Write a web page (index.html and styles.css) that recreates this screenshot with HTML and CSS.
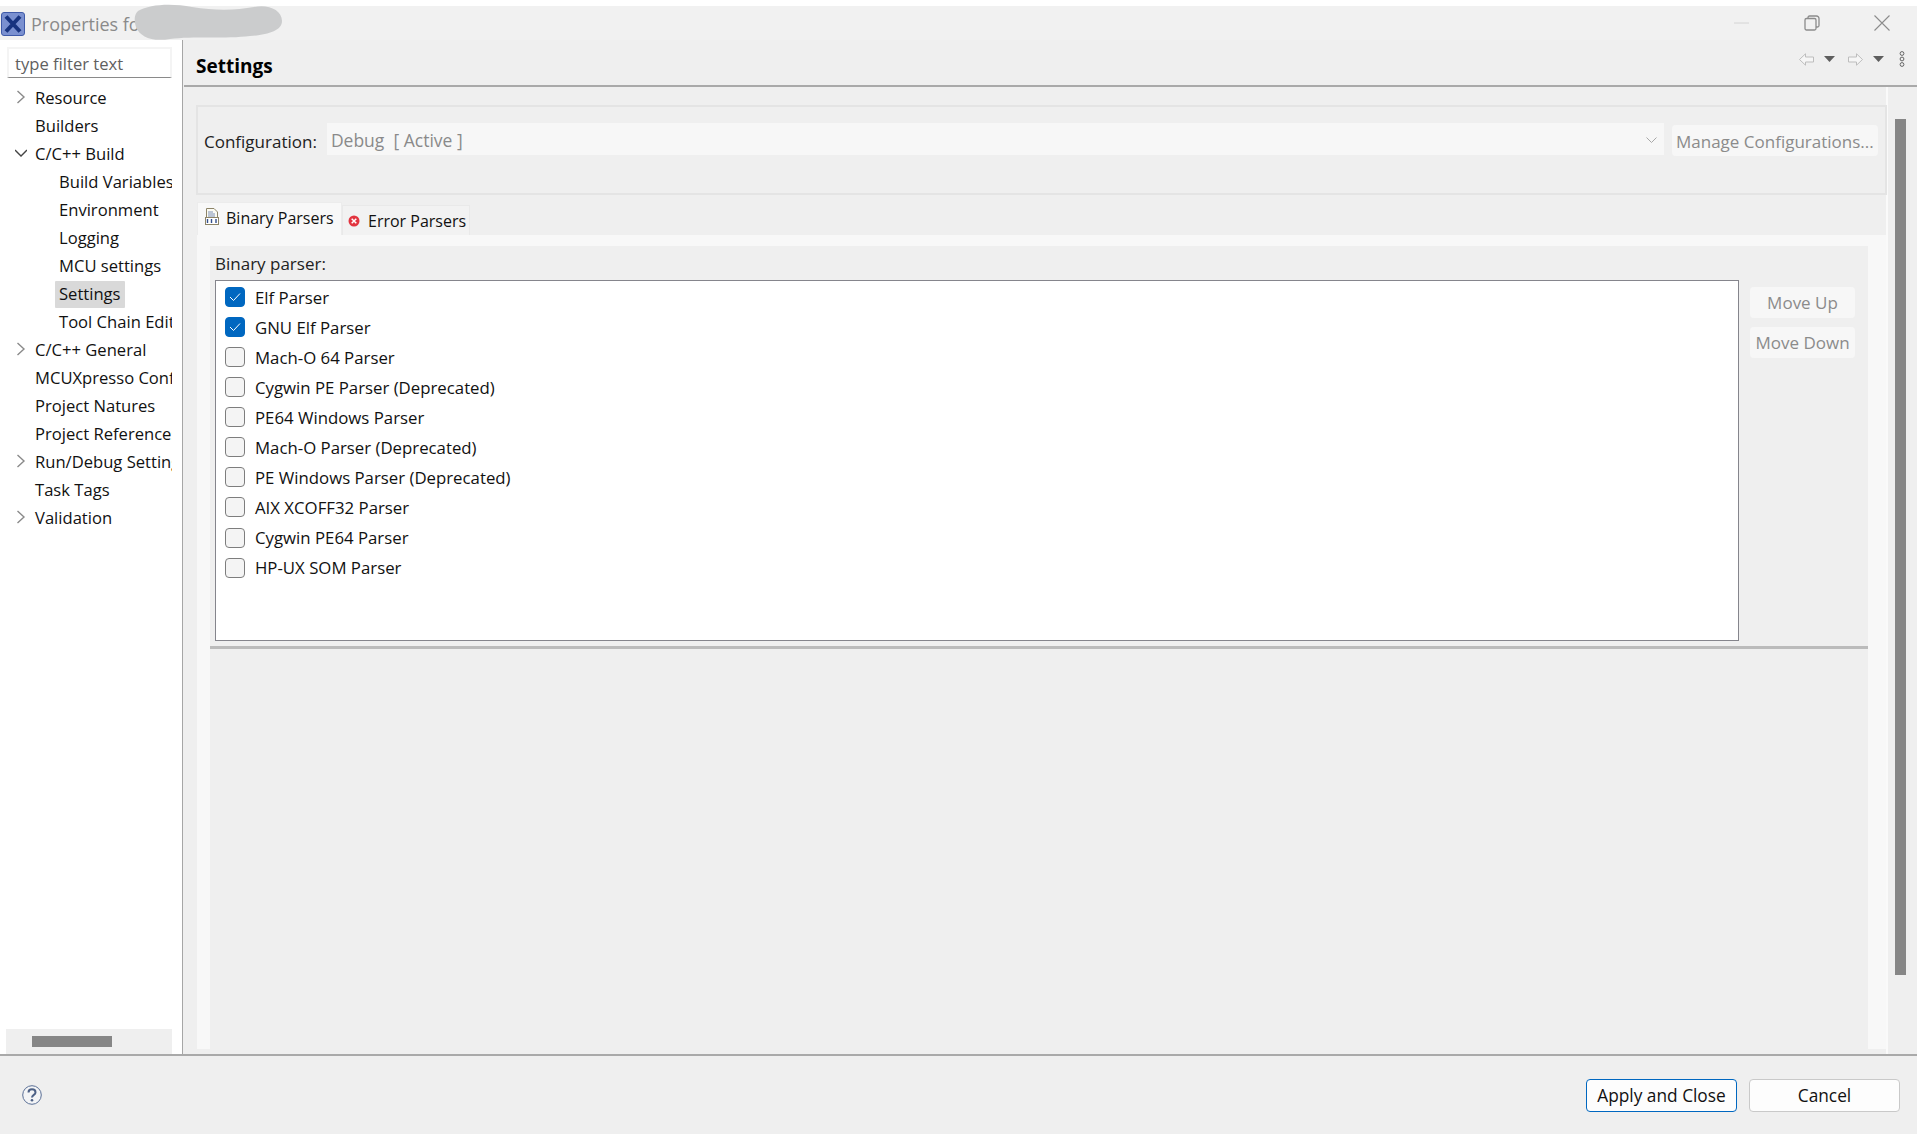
FILE: index.html
```html
<!DOCTYPE html>
<html lang="en">
<head>
<meta charset="utf-8">
<title>Properties</title>
<link rel="stylesheet" href="styles.css">
</head>
<body>
<div class="window">
  <div class="topstrip"></div>
  <header class="titlebar">
    <svg class="app-icon" width="24" height="24" viewBox="0 0 24 24"><rect x="0.5" y="0.5" width="23" height="23" rx="2.5" fill="#7a90d0" stroke="#3f5aa8"/><path d="M5 4.5 L19 19.5 M19 4.5 L5 19.5" stroke="#17337f" stroke-width="4" fill="none"/></svg>
    <span class="title-text">Properties for</span>
    <svg class="smudge" width="152" height="38" viewBox="0 0 152 38"><path d="M6 8 C18 1 40 0 60 4 C85 8 105 7 122 4 C135 1 150 6 150 18 C150 28 135 32 118 33 C95 36 60 33 38 36 C20 39 8 34 4 24 C2 17 2 12 6 8 Z" fill="#cbcccd"/></svg>
    <div class="winctl">
      <svg width="16" height="16" viewBox="0 0 16 16"><path d="M0 8 H15" stroke="#d4d4d4" fill="none"/></svg>
      <svg width="16" height="16" viewBox="0 0 16 16"><path d="M1 5 a1.5 1.5 0 0 1 1.5-1.5 h8 a1.5 1.5 0 0 1 1.5 1.5 v8.500 a1.500 1.500 0 0 1-1.500 1.500 h-8 a1.500 1.500 0 0 1-1.500-1.500z M4 3.500 v-1 a1.500 1.500 0 0 1 1.500-1.500 h7 a2.500 2.500 0 0 1 2.500 2.500 v7 a1.500 1.500 0 0 1-1.500 1.500 h-1" fill="none" stroke="#8c8c8c" stroke-width="1.300"/></svg>
      <svg width="16" height="16" viewBox="0 0 16 16"><path d="M0.500 0.500 L15.500 15.500 M15.500 0.500 L0.500 15.500" fill="none" stroke="#8c8c8c" stroke-width="1.100"/></svg>
    </div>
  </header>

  <div class="middle">
    <aside class="sidebar">
      <div class="filter">type filter text</div>
      <ul class="tree">
        <li class="row"><svg class="tw" width="12" height="14" viewBox="0 0 12 14"><path d="M2.500 1 L9 7 L2.500 13" fill="none" stroke="#8a8a8a" stroke-width="1.400"/></svg><span>Resource</span></li>
        <li class="row"><span class="tw"></span><span>Builders</span></li>
        <li class="row"><svg class="tw" width="12" height="14" viewBox="0 0 12 14"><path d="M0 4 L6 10 L12 4" fill="none" stroke="#444" stroke-width="1.400"/></svg><span>C/C++ Build</span></li>
        <li class="row sub"><span>Build Variables</span></li>
        <li class="row sub"><span>Environment</span></li>
        <li class="row sub"><span>Logging</span></li>
        <li class="row sub"><span>MCU settings</span></li>
        <li class="row sub"><span class="selected">Settings</span></li>
        <li class="row sub"><span>Tool Chain Editor</span></li>
        <li class="row"><svg class="tw" width="12" height="14" viewBox="0 0 12 14"><path d="M2.500 1 L9 7 L2.500 13" fill="none" stroke="#8a8a8a" stroke-width="1.400"/></svg><span>C/C++ General</span></li>
        <li class="row"><span class="tw"></span><span>MCUXpresso Config</span></li>
        <li class="row"><span class="tw"></span><span>Project Natures</span></li>
        <li class="row"><span class="tw"></span><span>Project References</span></li>
        <li class="row"><svg class="tw" width="12" height="14" viewBox="0 0 12 14"><path d="M2.500 1 L9 7 L2.500 13" fill="none" stroke="#8a8a8a" stroke-width="1.400"/></svg><span>Run/Debug Settings</span></li>
        <li class="row"><span class="tw"></span><span>Task Tags</span></li>
        <li class="row"><svg class="tw" width="12" height="14" viewBox="0 0 12 14"><path d="M2.500 1 L9 7 L2.500 13" fill="none" stroke="#8a8a8a" stroke-width="1.400"/></svg><span>Validation</span></li>
      </ul>
      <div class="hscroll"><div class="hthumb"></div></div>
    </aside>

    <main class="main">
      <div class="page-head">
        <h1 class="page-title">Settings</h1>
        <div class="nav">
          <svg width="15" height="13" viewBox="0 0 15 13"><path d="M0.500 6.500 L6.500 0.800 V4 H14.500 V9 H6.500 V12.200 Z" fill="#f6f6f6" stroke="#bdbdbd"/></svg>
          <svg class="drop" width="11" height="6" viewBox="0 0 11 6"><path d="M0 0 H11 L5.500 6 Z" fill="#5e5e5e"/></svg>
          <svg class="fwd" width="15" height="13" viewBox="0 0 15 13"><path d="M14.500 6.500 L8.500 0.800 V4 H0.500 V9 H8.500 V12.200 Z" fill="#f6f6f6" stroke="#bdbdbd"/></svg>
          <svg class="drop" width="11" height="6" viewBox="0 0 11 6"><path d="M0 0 H11 L5.500 6 Z" fill="#5e5e5e"/></svg>
          <svg class="dots" width="6" height="16" viewBox="0 0 6 16"><circle cx="3" cy="2.500" r="1.900" fill="none" stroke="#666" stroke-width="1"/><circle cx="3" cy="8" r="1.900" fill="none" stroke="#666" stroke-width="1"/><circle cx="3" cy="13.500" r="1.900" fill="none" stroke="#666" stroke-width="1"/></svg>
        </div>
      </div>

      <div class="page-body">
        <div class="content">
          <section class="config">
            <span class="config-label">Configuration:</span>
            <div class="combo"><span>Debug&nbsp;&nbsp;[ Active ]</span>
              <svg width="11" height="6" viewBox="0 0 11 6"><path d="M0.500 0.500 L5.500 5.500 L10.500 0.500" fill="none" stroke="#a8a8a8"/></svg>
            </div>
            <div class="btn-disabled manage">Manage Configurations...</div>
          </section>

          <nav class="tabs">
            <div class="tab active">
              <svg class="tab-icon" width="14" height="18" viewBox="0 0 14 18"><path d="M1.500 0.500 H9 L12.500 4 V10 H1.500 Z" fill="#fbfbf3" stroke="#8d8468"/><path d="M3 4 H8 M3 6 H10 M3 8 H10" stroke="#7c8fb5"/><rect x="0.500" y="9.500" width="13" height="7" fill="#fff" stroke="#8d8468"/><path d="M2.500 11 V15 M6.500 11 V15 M11 11 V15" stroke="#334f8c" stroke-width="1.400"/></svg>
              <span>Binary Parsers</span>
            </div>
            <div class="tab">
              <svg class="tab-icon" width="12" height="12" viewBox="0 0 12 12"><circle cx="6" cy="6" r="5.500" fill="#e2343f"/><path d="M3.700 3.700 L8.300 8.300 M8.300 3.700 L3.700 8.300" stroke="#fff" stroke-width="1.500"/></svg>
              <span>Error Parsers</span>
            </div>
          </nav>

          <section class="panel">
            <div class="panel-inner">
              <div class="parser-label">Binary parser:</div>
              <div class="parser-area">
                <ul class="parser-list">
                  <li class="parser"><span class="check on"><svg width="12" height="10" viewBox="0 0 12 10"><path d="M1 5 L4.500 8.500 L11 1.500" fill="none" stroke="#fff" stroke-width="1"/></svg></span>Elf Parser</li>
                  <li class="parser"><span class="check on"><svg width="12" height="10" viewBox="0 0 12 10"><path d="M1 5 L4.500 8.500 L11 1.500" fill="none" stroke="#fff" stroke-width="1"/></svg></span>GNU Elf Parser</li>
                  <li class="parser"><span class="check"></span>Mach-O 64 Parser</li>
                  <li class="parser"><span class="check"></span>Cygwin PE Parser (Deprecated)</li>
                  <li class="parser"><span class="check"></span>PE64 Windows Parser</li>
                  <li class="parser"><span class="check"></span>Mach-O Parser (Deprecated)</li>
                  <li class="parser"><span class="check"></span>PE Windows Parser (Deprecated)</li>
                  <li class="parser"><span class="check"></span>AIX XCOFF32 Parser</li>
                  <li class="parser"><span class="check"></span>Cygwin PE64 Parser</li>
                  <li class="parser"><span class="check"></span>HP-UX SOM Parser</li>
                </ul>
                <div class="side-btns">
                  <div class="btn-disabled">Move Up</div>
                  <div class="btn-disabled">Move Down</div>
                </div>
              </div>
              <div class="divider"></div>
            </div>
          </section>
        </div>
        <div class="vscroll"><div class="vthumb"></div></div>
      </div>
    </main>
  </div>

  <footer class="footer">
    <svg class="help" width="20" height="20" viewBox="0 0 20 20"><circle cx="10" cy="10" r="9.300" fill="#f3f4f6" stroke="#5a6f96" stroke-width="1"/><path d="M6.500 7.500 C6.500 3.300 13.500 3.300 13.500 7.500 C13.500 10 10 9.800 10 12.500" fill="none" stroke="#4d6186" stroke-width="2"/><circle cx="10" cy="15.200" r="1.300" fill="#4d6186"/></svg>
    <div class="footer-btns">
      <div class="btn primary">Apply and Close</div>
      <div class="btn">Cancel</div>
    </div>
  </footer>
</div>
</body>
</html>
```
FILE: styles.css
```css
* { box-sizing: border-box; }
html, body { margin: 0; padding: 0; }
body {
  font-family: "Open Sans", "Noto Sans", sans-serif;
  font-size: 17px;
  color: #111;
  background: #efefef;
}
ul { list-style: none; margin: 0; padding: 0; }
.window { width: 1917px; height: 1134px; display: flex; flex-direction: column; overflow: hidden; }
.topstrip { height: 6px; background: #fff; flex: none; }

.titlebar { height: 34px; flex: none; background: #f1f1f1; display: flex; align-items: center; padding-left: 1px; position: relative; padding-top: 1px; }
.app-icon { flex: none; }
.title-text { margin-left: 6px; color: #8a8a8a; font-size: 18px; white-space: nowrap; }
.smudge { position: absolute; left: 132px; top: -3px; }
.winctl { margin-left: auto; display: flex; align-items: center; gap: 54px; padding-right: 27px; margin-top: -1px; }

.middle { flex: 1; display: flex; min-height: 0; }
.sidebar { width: 183px; flex: none; background: #fff; border-right: 1px solid #a6a6a6; display: flex; flex-direction: column; padding-top: 7px; }
.filter { margin-left: 7px; width: 165px; height: 31px; border: 2px solid #f4f4f4; border-bottom: 1px solid #8a8a8a; padding-left: 6px; line-height: 29px; font-size: 16.600px; color: #5f5f5f; flex: none; }
.tree { margin: 5px 0 0 0; width: 172px; overflow: hidden; flex: 1; font-size: 16.600px; }
.row { height: 28px; display: flex; align-items: center; white-space: nowrap; padding-left: 15px; }
.tw { width: 12px; flex: none; margin-right: 8px; }
.sub { padding-left: 59px; }
.selected { background: #d9d9d9; margin: 2px 0 0 -4px; padding: 0 4px; line-height: 26px; height: 27px; border-radius: 1px; }
.hscroll { height: 25px; margin-left: 6px; width: 166px; background: #efefef; padding: 7px 0 0 26px; flex: none; }
.hthumb { width: 80px; height: 11px; background: #868686; }

.main { flex: 1; min-width: 0; display: flex; flex-direction: column; background: #efefef; }
.page-head { height: 47px; flex: none; margin-left: 1px; border-bottom: 2px solid #a9a9a9; display: flex; align-items: flex-start; padding-left: 12px; }
.page-title { margin: 14px 0 0; font-size: 19px; font-weight: 700; line-height: 24px; color: #000; }
.nav { margin-left: auto; display: flex; align-items: center; padding: 11px 12px 0 0; }
.drop { margin-left: 10px; }
.fwd { margin-left: 13px; }
.dots { margin-left: 15px; }

.page-body { flex: 1; min-height: 0; display: flex; padding-left: 13px; }
.content { width: 1692px; flex: none; padding-top: 18px; border-right: 2px solid #fafafa; display: flex; flex-direction: column; min-height: 0; }
.config { height: 90px; flex: none; width: 1691px; border: 2px solid #e4e4e4; display: flex; align-items: flex-start; padding: 16px 8px 0 6px; }
.config-label { color: #222; line-height: 38px; flex: none; }
.combo { margin-left: 10px; width: 1337px; height: 32px; background: #f7f7f7; display: flex; align-items: center; justify-content: space-between; padding: 1px 7px 0 4px; font-size: 17.500px; color: #8a8a8a; flex: none; }
.btn-disabled { background: #f7f7f7; color: #8b8b8b; border-radius: 4px; display: flex; align-items: center; justify-content: center; height: 31px; }
.manage { margin-left: 8px; margin-top: 2px; width: 206px; flex: none; white-space: nowrap; padding-top: 1px; }

.tabs { display: flex; align-items: flex-end; margin: 7px 0 0 1px; height: 33px; flex: none; font-size: 16px; }
.tab { display: flex; align-items: center; gap: 8px; height: 30px; width: 128px; background: #f2f2f2; border: 1px solid #e9e9e9; border-bottom: 0; padding-left: 5px; white-space: nowrap; }
.tab-icon { flex: none; }
.tab.active { width: 145px; height: 33px; background: #f8f8f8; border: 1px solid #ececec; border-bottom: 0; gap: 7px; padding-left: 7px; }
.tab.active svg { margin-top: -5px; }
.tab.active span { margin-top: -3px; }

.panel { flex: 1; min-height: 0; width: 1689px; margin: 0 0 5px 1px; background: #f8f8f8; padding: 11px 18px 0 13px; }
.panel-inner { height: 100%; background: #efefef; display: flex; flex-direction: column; }
.parser-label { padding: 6px 0 0 5px; line-height: 24px; height: 35px; color: #222; flex: none; }
.parser-area { display: flex; align-items: flex-start; padding-left: 5px; flex: none; margin-top: -1px; }
.parser-list { width: 1524px; height: 361px; background: #fff; border: 1.500px solid #85858c; padding: 1px 0 0 9px; flex: none; font-size: 16.800px; }
.parser { height: 30.070px; display: flex; align-items: center; gap: 10px; white-space: nowrap; }
.check { width: 20px; height: 20px; border: 1.500px solid #7d7d7d; border-radius: 4px; background: #f4f4f4; flex: none; display: flex; align-items: center; justify-content: center; }
.check.on { background: #0067c0; border-color: #0067c0; }
.side-btns { display: flex; flex-direction: column; gap: 9px; margin: 7px 0 0 11px; width: 105px; flex: none; }
.divider { height: 3px; background: #bbb; margin-top: 5px; flex: none; }

.vscroll { flex: 1; padding: 32px 0 0 7px; }
.vthumb { width: 11px; height: 856px; background: #868686; }

.footer { height: 80px; flex: none; border-top: 2px solid #a9a9a9; background: #efefef; display: flex; align-items: flex-start; padding: 27px 17px 0 22px; }
.help { margin-top: 2px; }
.footer-btns { margin-left: auto; display: flex; gap: 12px; margin-top: -4px; }
.btn { width: 151px; height: 33px; border: 1.500px solid #c9c9c9; border-radius: 4px; background: #fdfdfd; display: flex; align-items: center; justify-content: center; color: #111; font-size: 17.300px; }
.btn.primary { border-color: #0067c0; }
```
